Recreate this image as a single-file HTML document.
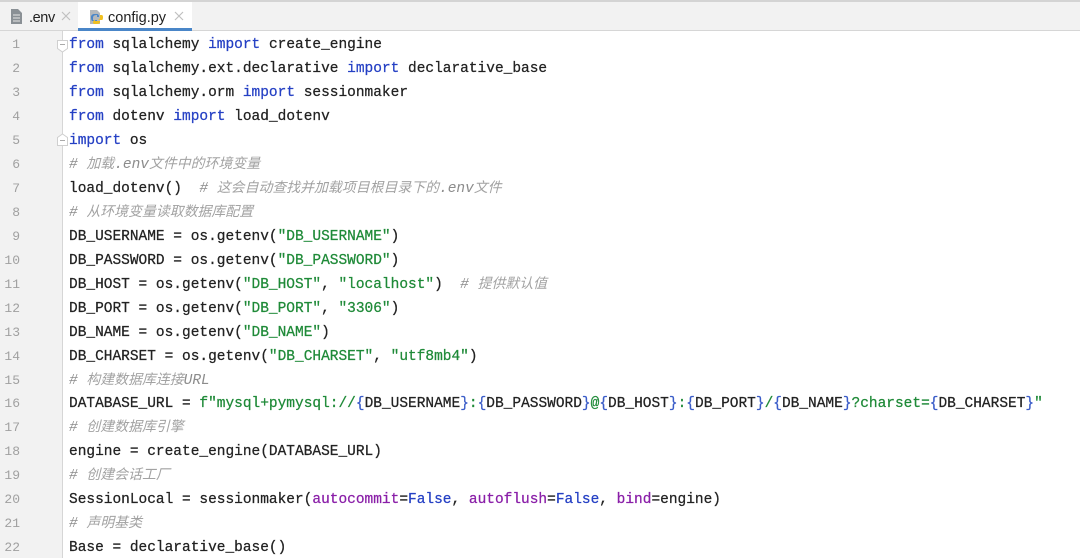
<!DOCTYPE html>
<html><head><meta charset="utf-8">
<style>
html,body{margin:0;padding:0;background:#fff;}
#r{position:relative;width:1080px;height:558px;overflow:hidden;background:#fff;}
.l{position:absolute;left:69px;height:24px;line-height:24px;white-space:pre;font-family:"Liberation Mono","Noto Sans CJK SC",monospace;font-size:14.49px;color:#222;-webkit-text-stroke:0.25px #222;}
.n{position:absolute;left:0;width:20px;text-align:right;height:24px;line-height:24px;font-family:"Liberation Mono",monospace;font-size:13px;color:#a0a0a0;}
.k{color:#2540c4;-webkit-text-stroke:0.25px #2540c4;}
.s{color:#1f8a38;-webkit-text-stroke:0.25px #1f8a38;}
.c{color:#8c8c8c;font-style:italic;-webkit-text-stroke:0;}
.c i{font-size:13.9px;color:#a2a2a2;}
.p{color:#8a1fa8;-webkit-text-stroke:0.25px #8a1fa8;}
.b{color:#3a5cc8;-webkit-text-stroke:0.25px #3a5cc8;}
.t{position:absolute;font-family:"Liberation Sans",sans-serif;font-size:14.5px;color:#222;line-height:20px;height:20px;white-space:pre;}
</style></head><body><div id="r">
<div style="position:absolute;left:0;top:0;width:1080px;height:31px;background:#f2f2f2;"></div>
<div style="position:absolute;left:0;top:0;width:1080px;height:2px;background:#d4d4d4;"></div>
<div style="position:absolute;left:0;top:30px;width:1080px;height:1px;background:#d6d6d6;"></div>
<div style="position:absolute;left:78px;top:2px;width:114px;height:26px;background:#fff;"></div>
<div style="position:absolute;left:78px;top:28px;width:114px;height:3px;background:#4a86c8;"></div>
<div style="position:absolute;left:0;top:31px;width:62px;height:527px;background:#f2f2f2;"></div>
<div style="position:absolute;left:62px;top:31px;width:1px;height:527px;background:#d6d6d6;"></div>

<svg style="position:absolute;left:0;top:0" width="200" height="31">
<path d="M11 9h7l4 4v11H11z" fill="#8a9095"/><path d="M13 15h7M13 18h7M13 21h7" stroke="#e8e8e8" stroke-width="1"/>
<path d="M90 10h7l3 3v11H90z" fill="#b4b8bc"/>
<path d="M97 15c-3 0-4 1-4 3v2h4v1h-5c-1-1-1-3-1-4 0-2 2-3 3-3h3c1 0 2 1 2 2v1h-2z" fill="#4a86c8"/>
<path d="M95 24c3 0 5 0 5-2v-1h-5v-1h7c1 0 1-2 1-3 0-2-1-2-2-2h-1v2c0 2-1 3-3 3h-2c-1 0-2 1-2 2 0 2 1 2 2 2z" fill="#f0c020"/>
<path d="M62 12l8 8M70 12l-8 8M175 12l8 8M183 12l-8 8" stroke="#c0c0c0" stroke-width="1.2" fill="none"/>
</svg>
<div class="t" style="left:29px;top:8px;letter-spacing:-0.4px;">.env</div>
<div class="t" style="left:108px;top:8px;">config.py</div>

<svg style="position:absolute;left:56px;top:38px" width="16" height="112">
<path d="M1.5 2.5h10v8l-5 3.5-5-3.5z" fill="#fff" stroke="#cfcfcf"/><path d="M4 6.5h5" stroke="#aaa"/>
<path d="M1.5 107.5v-8l5-3.5 5 3.5v8z" fill="#fff" stroke="#cfcfcf"/><path d="M4 102.5h5" stroke="#aaa"/>
</svg>

<div class="n" style="top:33px">1</div>
<div class="n" style="top:57px">2</div>
<div class="n" style="top:81px">3</div>
<div class="n" style="top:105px">4</div>
<div class="n" style="top:129px">5</div>
<div class="n" style="top:153px">6</div>
<div class="n" style="top:177px">7</div>
<div class="n" style="top:201px">8</div>
<div class="n" style="top:225px">9</div>
<div class="n" style="top:249px">10</div>
<div class="n" style="top:273px">11</div>
<div class="n" style="top:297px">12</div>
<div class="n" style="top:321px">13</div>
<div class="n" style="top:345px">14</div>
<div class="n" style="top:369px">15</div>
<div class="n" style="top:392px">16</div>
<div class="n" style="top:416px">17</div>
<div class="n" style="top:440px">18</div>
<div class="n" style="top:464px">19</div>
<div class="n" style="top:488px">20</div>
<div class="n" style="top:512px">21</div>
<div class="n" style="top:536px">22</div>

<div class="l" style="top:33px"><span class="k">from</span> sqlalchemy <span class="k">import</span> create_engine</div>
<div class="l" style="top:57px"><span class="k">from</span> sqlalchemy.ext.declarative <span class="k">import</span> declarative_base</div>
<div class="l" style="top:81px"><span class="k">from</span> sqlalchemy.orm <span class="k">import</span> sessionmaker</div>
<div class="l" style="top:105px"><span class="k">from</span> dotenv <span class="k">import</span> load_dotenv</div>
<div class="l" style="top:129px"><span class="k">import</span> os</div>
<div class="l" style="top:153px"><span class="c"># <i>加载</i>.env<i>文件中的环境变量</i></span></div>
<div class="l" style="top:177px">load_dotenv()  <span class="c"># <i>这会自动查找并加载项目根目录下的</i>.env<i>文件</i></span></div>
<div class="l" style="top:201px"><span class="c"># <i>从环境变量读取数据库配置</i></span></div>
<div class="l" style="top:225px">DB_USERNAME = os.getenv(<span class="s">"DB_USERNAME"</span>)</div>
<div class="l" style="top:249px">DB_PASSWORD = os.getenv(<span class="s">"DB_PASSWORD"</span>)</div>
<div class="l" style="top:273px">DB_HOST = os.getenv(<span class="s">"DB_HOST"</span>, <span class="s">"localhost"</span>)  <span class="c"># <i>提供默认值</i></span></div>
<div class="l" style="top:297px">DB_PORT = os.getenv(<span class="s">"DB_PORT"</span>, <span class="s">"3306"</span>)</div>
<div class="l" style="top:321px">DB_NAME = os.getenv(<span class="s">"DB_NAME"</span>)</div>
<div class="l" style="top:345px">DB_CHARSET = os.getenv(<span class="s">"DB_CHARSET"</span>, <span class="s">"utf8mb4"</span>)</div>
<div class="l" style="top:369px"><span class="c"># <i>构建数据库连接</i>URL</span></div>
<div class="l" style="top:392px">DATABASE_URL = <span class="s">f"mysql+pymysql://</span><span class="b">{</span>DB_USERNAME<span class="b">}</span><span class="s">:</span><span class="b">{</span>DB_PASSWORD<span class="b">}</span><span class="s">@</span><span class="b">{</span>DB_HOST<span class="b">}</span><span class="s">:</span><span class="b">{</span>DB_PORT<span class="b">}</span><span class="s">/</span><span class="b">{</span>DB_NAME<span class="b">}</span><span class="s">?charset=</span><span class="b">{</span>DB_CHARSET<span class="b">}</span><span class="s">"</span></div>
<div class="l" style="top:416px"><span class="c"># <i>创建数据库引擎</i></span></div>
<div class="l" style="top:440px">engine = create_engine(DATABASE_URL)</div>
<div class="l" style="top:464px"><span class="c"># <i>创建会话工厂</i></span></div>
<div class="l" style="top:488px">SessionLocal = sessionmaker(<span class="p">autocommit</span>=<span class="k">False</span>, <span class="p">autoflush</span>=<span class="k">False</span>, <span class="p">bind</span>=engine)</div>
<div class="l" style="top:512px"><span class="c"># <i>声明基类</i></span></div>
<div class="l" style="top:536px">Base = declarative_base()</div>
</div></body></html>
